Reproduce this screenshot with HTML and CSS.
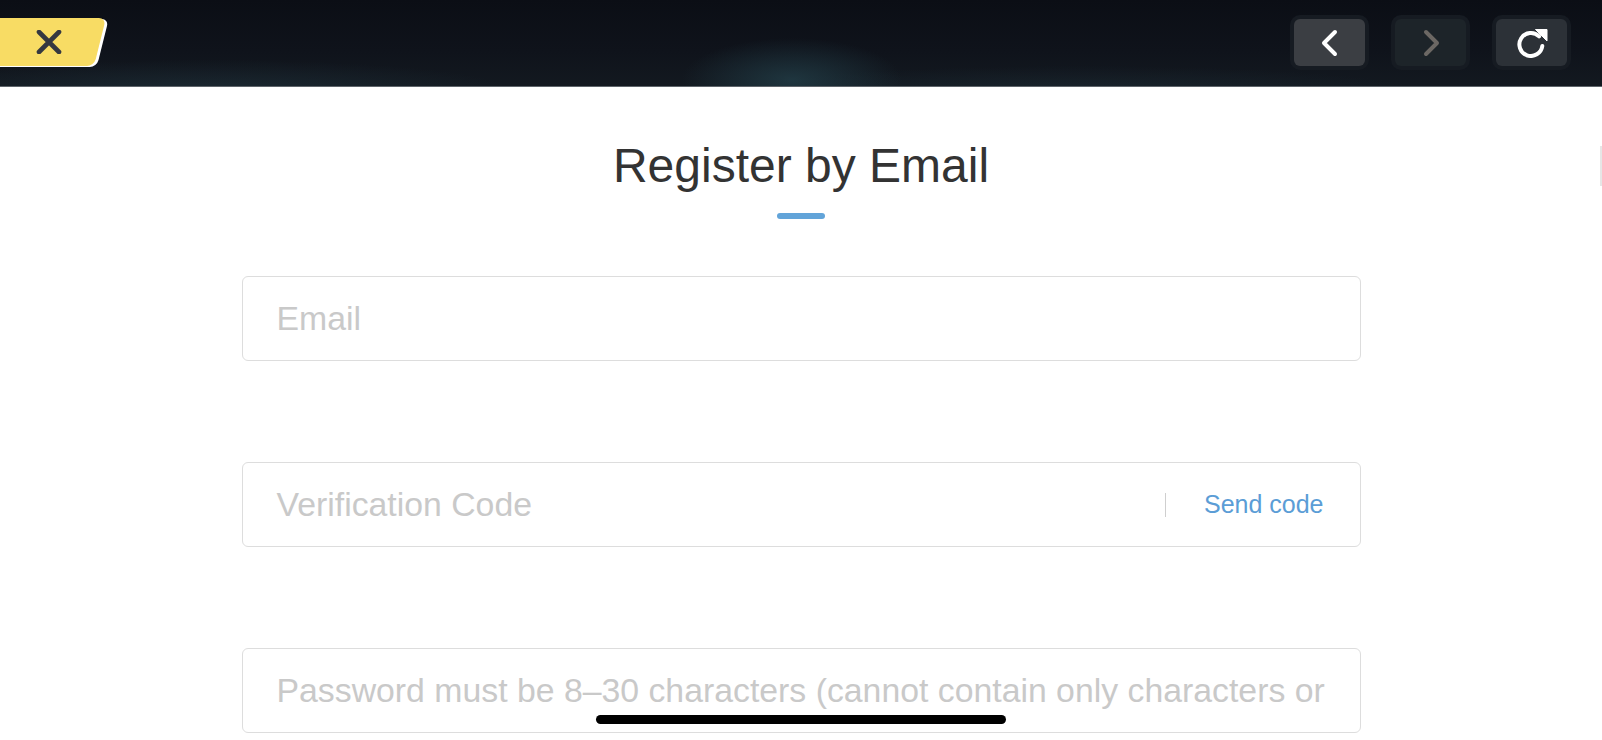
FILE: index.html
```html
<!DOCTYPE html>
<html lang="en">
<head>
<meta charset="utf-8">
<title>Register by Email</title>
<link rel="stylesheet" href="styles.css">
</head>
<body>
<header class="topbar">
  <button class="close-btn" aria-label="Close">
    <svg class="close-icon" viewBox="0 0 26 24" width="26" height="24"><path d="M3 2 L23 22 M23 2 L3 22" stroke="#353840" stroke-width="4.6" stroke-linecap="round" fill="none"/></svg>
  </button>
  <nav class="nav-group">
    <button class="nav-btn nav-back" aria-label="Back">
      <svg viewBox="0 0 22 28" width="22" height="28"><polyline points="16,3 5,14 16,25" stroke="#ffffff" stroke-width="4" stroke-linecap="round" stroke-linejoin="round" fill="none"/></svg>
    </button>
    <button class="nav-btn nav-fwd" aria-label="Forward">
      <svg viewBox="0 0 22 28" width="22" height="28"><polyline points="6,3 17,14 6,25" stroke="#6c6864" stroke-width="4" stroke-linecap="round" stroke-linejoin="round" fill="none"/></svg>
    </button>
    <button class="nav-btn nav-reload" aria-label="Reload">
      <svg viewBox="0 0 32 30" width="32" height="30"><path d="M23.1 8.4 A11.5 11.5 0 1 0 26.3 18" stroke="#ffffff" stroke-width="4" stroke-linecap="round" fill="none"/><polygon points="19.5,1.5 31,1.5 31,13" fill="#ffffff" stroke="#ffffff" stroke-width="1" stroke-linejoin="round"/></svg>
    </button>
  </nav>
</header>

<main class="content">
  <h1 class="title">Register by Email</h1>
  <div class="title-bar"></div>

  <form class="form">
    <div class="field">
      <span class="placeholder">Email</span>
    </div>
    <div class="field">
      <span class="placeholder grow">Verification Code</span>
      <span class="divider"></span>
      <span class="send-code">Send code</span>
    </div>
    <div class="field">
      <span class="placeholder grow">Password must be 8–30 characters (cannot contain only characters or</span>
    </div>
  </form>
</main>

<div class="scroll-indicator"></div>
<div class="home-indicator"></div>
</body>
</html>
```

FILE: styles.css
```css
* { box-sizing: border-box; }

html, body {
  margin: 0;
  padding: 0;
  width: 1602px;
  height: 740px;
  overflow: hidden;
  background: #ffffff;
  font-family: "Liberation Sans", Arial, sans-serif;
}

button {
  font: inherit;
  border: 0;
  padding: 0;
  cursor: pointer;
}

.topbar {
  height: 87px;
  display: flex;
  align-items: center;
  justify-content: space-between;
  padding: 0 35px 1px 0;
  border-bottom: 1px solid #5e646a;
  background:
    radial-gradient(ellipse 110px 42px at 792px 80px, rgba(36, 66, 76, 0.7), rgba(36, 66, 76, 0) 100%),
    radial-gradient(ellipse 300px 30px at 210px 90px, rgba(32, 52, 62, 0.55), rgba(32, 52, 62, 0) 100%),
    radial-gradient(ellipse 340px 26px at 1080px 92px, rgba(32, 52, 62, 0.4), rgba(32, 52, 62, 0) 100%),
    linear-gradient(180deg, #0b0e15 0%, #0f131b 60%, #131920 100%);
}

.close-btn {
  position: relative;
  width: 100px;
  height: 48px;
  margin-top: -1px;
  display: flex;
  align-items: center;
  justify-content: flex-start;
  padding-left: 36px;
  background: transparent;
  z-index: 0;
}

.close-btn::before {
  content: "";
  position: absolute;
  top: 0;
  bottom: 0;
  left: -30px;
  right: 0;
  background: #f8dc64;
  border-radius: 7px;
  transform: skewX(-14deg);
  box-shadow: 3px 1px 0 #ffffff;
  z-index: -1;
}

.close-icon { display: block; }

.nav-group {
  display: flex;
  gap: 30px;
}

.nav-btn {
  width: 71px;
  height: 47px;
  border-radius: 6px;
  display: flex;
  align-items: center;
  justify-content: center;
  box-shadow: 0 0 0 4px #161b22;
}

.nav-btn svg { display: block; }

.nav-back { background: #3b3e43; }
.nav-fwd { background: #1d2429; }
.nav-reload { background: #2c3137; }

.content {
  display: flex;
  flex-direction: column;
  align-items: center;
}

.title {
  margin: 51px 0 0;
  font-size: 48px;
  line-height: 55px;
  font-weight: 400;
  color: #333333;
}

.title-bar {
  width: 48px;
  height: 6px;
  margin-top: 20px;
  border-radius: 3px;
  background: #62a4d9;
}

.form {
  margin-top: 57px;
  width: 1119px;
  display: flex;
  flex-direction: column;
  gap: 101px;
}

.field {
  height: 85px;
  border: 1px solid #dddddd;
  border-radius: 6px;
  display: flex;
  align-items: center;
  padding: 0 36px 0 34px;
}

.placeholder {
  font-size: 33.8px;
  color: #c9c9c9;
  white-space: nowrap;
}

.grow {
  flex: 1;
  min-width: 0;
}

.divider {
  width: 1px;
  height: 24px;
  background: #cfcfcf;
  margin: 0 38px 0 0;
}

.send-code {
  font-size: 25px;
  color: #5b9dd6;
}

.scroll-indicator {
  position: absolute;
  right: 0;
  top: 146px;
  width: 2px;
  height: 40px;
  background: #e6e6e6;
}

.home-indicator {
  position: absolute;
  left: 596px;
  top: 715px;
  width: 410px;
  height: 9px;
  border-radius: 5px;
  background: #000000;
}
```
